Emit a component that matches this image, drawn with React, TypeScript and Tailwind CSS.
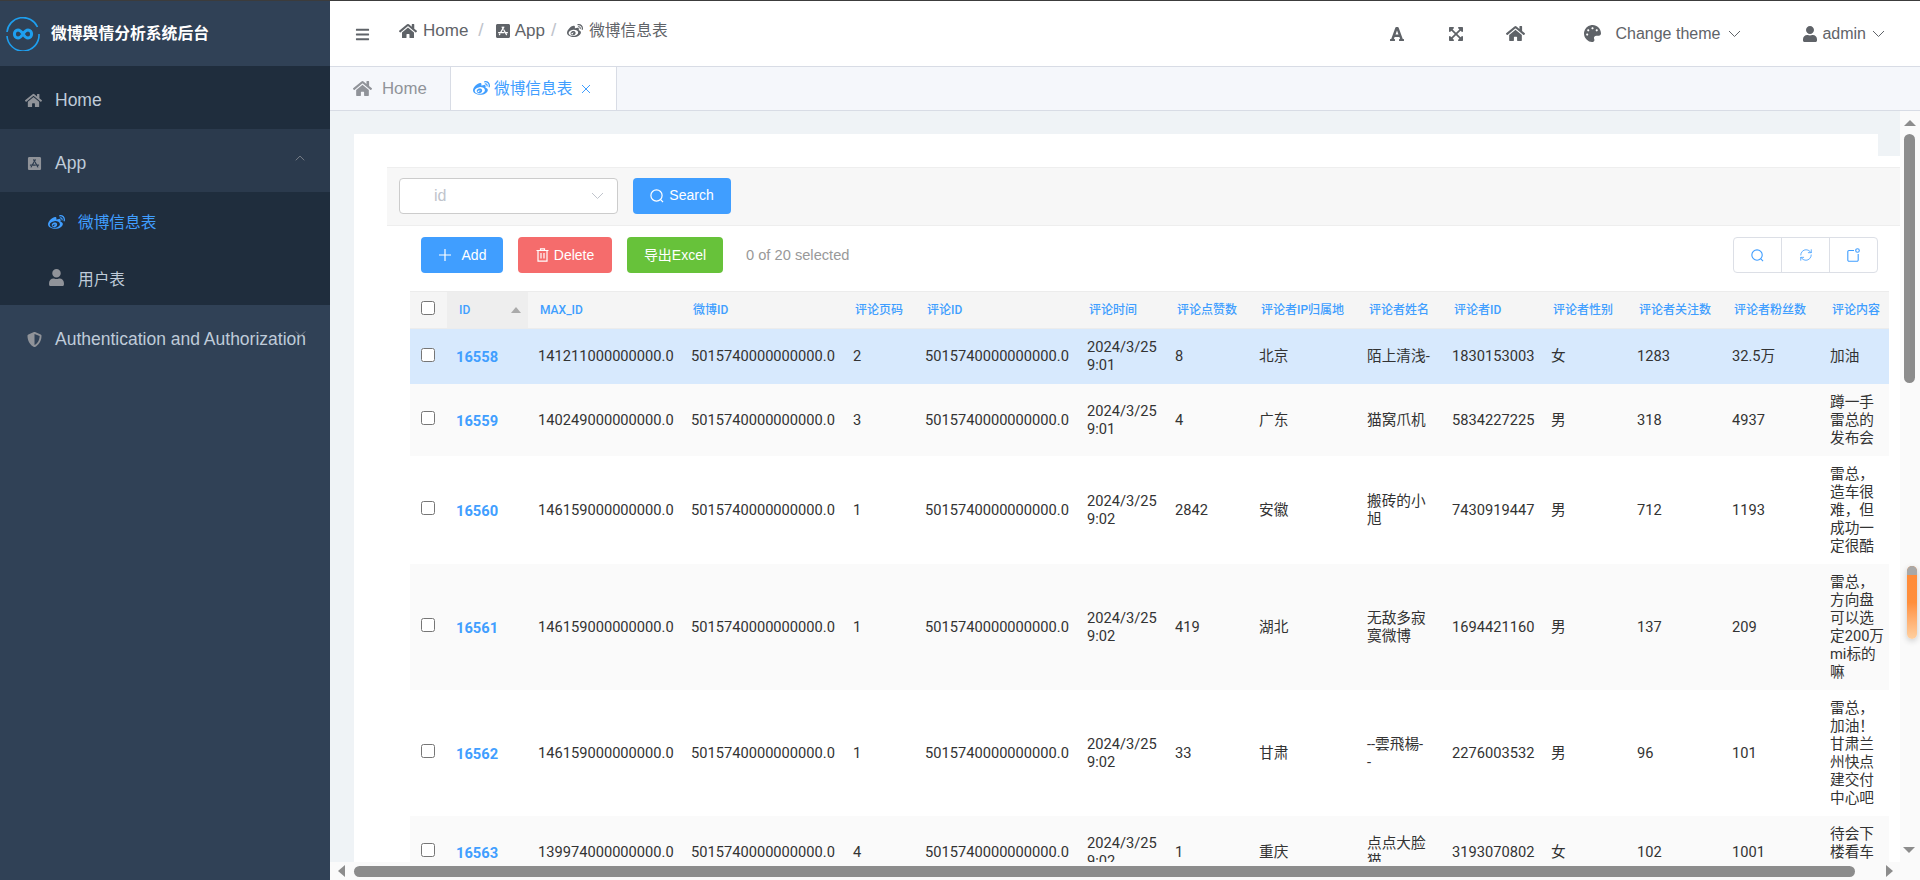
import { FaAppStoreIos, FaBars, FaExpandArrowsAlt, FaFont, FaHome, FaPalette, FaShieldAlt, FaUser, FaWeibo } from "react-icons/fa";
import { RefreshCw } from "lucide-react";

const headers = ["ID", "MAX_ID", "微博ID", "评论页码", "评论ID", "评论时间", "评论点赞数", "评论者IP归属地", "评论者姓名", "评论者ID", "评论者性别", "评论者关注数", "评论者粉丝数", "评论内容"];

const rows = [
  { id: "16558", bg: "bg-[#d7e9fd]", h: "h-[55px]", cells: ["141211000000000.0", "5015740000000000.0", "2", "5015740000000000.0", "2024/3/25 9:01", "8", "北京", "陌上清浅-", "1830153003", "女", "1283", "32.5万", "加油"] },
  { id: "16559", bg: "bg-[#fafafa]", h: "", cells: ["140249000000000.0", "5015740000000000.0", "3", "5015740000000000.0", "2024/3/25 9:01", "4", "广东", "猫窝爪机", "5834227225", "男", "318", "4937", "蹲一手雷总的发布会"] },
  { id: "16560", bg: "bg-white", h: "", cells: ["146159000000000.0", "5015740000000000.0", "1", "5015740000000000.0", "2024/3/25 9:02", "2842", "安徽", "搬砖的小旭", "7430919447", "男", "712", "1193", "雷总，造车很难，但成功一定很酷"] },
  { id: "16561", bg: "bg-[#fafafa]", h: "", cells: ["146159000000000.0", "5015740000000000.0", "1", "5015740000000000.0", "2024/3/25 9:02", "419", "湖北", "无敌多寂寞微博", "1694421160", "男", "137", "209", "雷总，方向盘可以选定200万mi标的嘛"] },
  { id: "16562", bg: "bg-white", h: "", cells: ["146159000000000.0", "5015740000000000.0", "1", "5015740000000000.0", "2024/3/25 9:02", "33", "甘肃", "--雲飛楊-\n-", "2276003532", "男", "96", "101", "雷总，加油！甘肃兰州快点建交付中心吧"] },
  { id: "16563", bg: "bg-[#fafafa]", h: "", cells: ["139974000000000.0", "5015740000000000.0", "4", "5015740000000000.0", "2024/3/25 9:02", "1", "重庆", "点点大脸猫", "3193070802", "女", "102", "1001", "待会下楼看车了"] },
];

function Chevron({ className, up }: { className?: string; up?: boolean }) {
  return (
    <svg width="13" height="8" viewBox="0 0 13 8" fill="none" stroke="currentColor" strokeWidth="1" className={className}>
      <path d={up ? "M1 7 L6.5 1.5 L12 7" : "M1 1 L6.5 6.5 L12 1"} />
    </svg>
  );
}

function SearchIcon({ size = 14 }: { size?: number }) {
  return (
    <svg width={size} height={size} viewBox="0 0 14 14" fill="none" stroke="currentColor" strokeWidth="1.2">
      <circle cx="6.5" cy="6.5" r="5.6" />
      <path d="M10.6 10.6 L13 13" />
    </svg>
  );
}

function Logo() {
  return (
    <svg width="34" height="34" viewBox="0 0 34 34" fill="none" stroke="#1e9fef">
      <path d="M1 15 A16 16 0 0 1 31.5 10" strokeWidth="1.6" />
      <path d="M1 19 A16 16 0 0 0 33 17" strokeWidth="1.6" />
      <path d="M17 17 C15 14 13.5 13 12 13 C9.8 13 8.4 15 8.4 17 C8.4 19 9.8 21 12 21 C13.5 21 15 20 17 17 C19 14 20.5 13 22 13 C24.2 13 25.6 15 25.6 17 C25.6 19 24.2 21 22 21 C20.5 21 19 20 17 17 Z" strokeWidth="3" />
    </svg>
  );
}

function Sidebar() {
  return (
    <aside className="w-[330px] shrink-0 bg-[#304156] text-[#bfcbd9] text-[17.5px]">
      <div className="h-[65px] flex items-center pl-[6px]">
        <Logo />
        <span className="ml-[11px] text-[15.8px] font-bold text-white">微博舆情分析系统后台</span>
      </div>
      <div className="h-[63px] bg-[#1f2d3d] flex items-center pl-[25px] pt-[5px]">
        <FaHome size={17} className="text-[#909399]" />
        <span className="ml-[13px]">Home</span>
      </div>
      <div className="h-[63px] bg-[#2b3a4d] flex items-center pl-[27px] pr-[25px] pt-[5px]">
        <FaAppStoreIos size={15} className="text-[#909399]" />
        <span className="ml-[13px] flex-1">App</span>
        <Chevron up className="text-[#909399] w-[10px] -mt-[10px]" />
      </div>
      <div className="bg-[#1f2d3d] h-[113px] flex flex-col">
        <div className="h-[58px] flex items-center pl-[48px] pt-[3px] text-[#409eff]">
          <FaWeibo size={17} />
          <span className="ml-[13px] text-[15.7px]">微博信息表</span>
        </div>
        <div className="h-[55px] flex items-center pl-[48px] pt-[4px]">
          <FaUser size={17} className="text-[#909399] -mt-[4px]" />
          <span className="ml-[13px] text-[15.7px]">用户表</span>
        </div>
      </div>
      <div className="relative h-[63px] flex items-center pl-[27px] pt-[5px]">
        <FaShieldAlt size={15} className="text-[#909399]" />
        <span className="ml-[13px] whitespace-nowrap">Authentication and Authorization</span>
        <Chevron className="absolute left-[295px] top-[25px] text-[#909399] w-[11px]" />
      </div>
    </aside>
  );
}

function TopNav() {
  return (
    <header className="h-[65px] shrink-0 bg-white flex items-center text-[#5f6368] text-[17px]">
      <FaBars size={15} className="ml-[25px] mt-[1px]" />
      <div className="flex items-center ml-[29px] -mt-[6px]">
        <FaHome size={18} />
        <span className="ml-[6px]">Home</span>
        <span className="ml-[10px] text-[19px] text-[#c0c4cc]">/</span>
        <FaAppStoreIos size={16} className="ml-[11px]" />
        <span className="ml-[4px]">App</span>
        <span className="ml-[6px] text-[19px] text-[#c0c4cc]">/</span>
        <FaWeibo size={16} className="ml-[11px]" />
        <span className="ml-[6px] text-[15.7px]">微博信息表</span>
      </div>
      <div className="ml-auto flex items-center pr-[35px] text-[16px]">
        <FaFont size={16} />
        <FaExpandArrowsAlt size={16} className="ml-[43px]" />
        <FaHome size={19} className="ml-[42px]" />
        <FaPalette size={17} className="ml-[59px]" />
        <span className="ml-[14px]">Change theme</span>
        <Chevron className="ml-[8px]" />
        <FaUser size={16} className="ml-[61px]" />
        <span className="ml-[4px]">admin</span>
        <Chevron className="ml-[6px]" />
      </div>
    </header>
  );
}

function Tabs() {
  return (
    <div className="h-[45px] shrink-0 flex bg-[#f5f7fb] border-y border-[#d8dce5] text-[16.8px]">
      <div className="w-[121px] flex items-center pl-[23px] text-[#909399] border-r border-[#d8dce5]">
        <FaHome size={19} />
        <span className="ml-[10px]">Home</span>
      </div>
      <div className="w-[166px] flex items-center pl-[22px] bg-white text-[#409eff] border-r border-[#d8dce5]">
        <FaWeibo size={17} />
        <span className="ml-[4px] text-[15.7px]">微博信息表</span>
        <svg width="10" height="10" viewBox="0 0 10 10" stroke="currentColor" strokeWidth="1" className="ml-[9px]">
          <path d="M1 1 L9 9 M9 1 L1 9" />
        </svg>
      </div>
    </div>
  );
}

function Toolbar() {
  return (
    <>
      <div className="ml-[33px] mt-[11px] h-[59px] bg-[#f7f7f7] border-y border-[#eeeeee] flex items-center pl-[12px] pb-[2px]">
        <div className="w-[219px] h-[36px] bg-white border border-[#cccccc] rounded-[4px] flex items-center pl-[34px] pr-[13px] justify-between text-[#c0c4cc] text-[16px]">
          <span>id</span>
          <Chevron />
        </div>
        <button className="ml-[15px] w-[98px] h-[36px] bg-[#409eff] text-white text-[14px] rounded-[4px] flex items-center justify-center gap-[5px]">
          <SearchIcon />
          <span>Search</span>
        </button>
      </div>
      <div className="ml-[67px] mt-[11px] flex items-center h-[36px] pr-[22px]">
        <button className="w-[82px] h-[36px] bg-[#409eff] text-white text-[14px] rounded-[4px] flex items-center justify-center">
          <svg width="14" height="14" viewBox="0 0 14 14" stroke="currentColor" strokeWidth="1.2">
            <path d="M7 1 V13 M1 7 H13" />
          </svg>
          <span className="ml-[10px]">Add</span>
        </button>
        <button className="ml-[15px] w-[94px] h-[36px] bg-[#f56c6c] text-white text-[14px] rounded-[4px] flex items-center justify-center">
          <svg width="13" height="14" viewBox="0 0 13 14" fill="none" stroke="currentColor" strokeWidth="1.2">
            <path d="M0.5 2.5 H12.5 M4.5 2.5 V0.8 H8.5 V2.5 M2 2.5 V13.2 H11 V2.5 M5 5 V10.5 M8 5 V10.5" />
          </svg>
          <span className="ml-[5px]">Delete</span>
        </button>
        <button className="ml-[15px] w-[96px] h-[36px] bg-[#67c23a] text-white text-[14px] rounded-[4px] flex items-center justify-center">
          导出Excel
        </button>
        <span className="ml-[23px] text-[#999999]">0 of 20 selected</span>
        <div className="ml-auto flex h-[36px] w-[145px] border border-[#dcdfe6] rounded-[4px] text-[#409eff]">
          <div className="flex-1 flex items-center justify-center border-r border-[#dcdfe6]">
            <SearchIcon size={13} />
          </div>
          <div className="flex-1 flex items-center justify-center border-r border-[#dcdfe6]">
            <RefreshCw size={14} strokeWidth={1.4} />
          </div>
          <div className="flex-1 flex items-center justify-center">
            <svg width="13" height="14" viewBox="0 0 13 14" fill="none" stroke="currentColor" strokeWidth="1.1">
              <path d="M7 2.5 H2 A1.2 1.2 0 0 0 0.8 3.7 V12 A1.2 1.2 0 0 0 2 13.2 H10 A1.2 1.2 0 0 0 11.2 12 V6" />
              <circle cx="10.5" cy="2.5" r="1.8" />
            </svg>
          </div>
        </div>
      </div>
    </>
  );
}

function DataTable() {
  return (
    <table className="ml-[56px] mt-[18px] w-[1479px] table-fixed border-collapse font-['Roboto','Noto_Sans_CJK_SC',sans-serif] text-[14.67px] leading-[18px] text-[#333333]">
      <colgroup>
        <col className="w-[37px]" />
        <col className="w-[81px]" />
        <col className="w-[153px]" />
        <col className="w-[162px]" />
        <col className="w-[72px]" />
        <col className="w-[162px]" />
        <col className="w-[88px]" />
        <col className="w-[84px]" />
        <col className="w-[108px]" />
        <col className="w-[85px]" />
        <col className="w-[99px]" />
        <col className="w-[86px]" />
        <col className="w-[95px]" />
        <col className="w-[98px]" />
        <col className="w-[69px]" />
      </colgroup>
      <thead>
        <tr className="h-[37px] bg-[#f5f5f5] border-y border-[#ececec]">
          <th className="p-0 pl-[11px] text-left align-middle">
            <input type="checkbox" className="block w-[14px] h-[14px] -mt-[5px]" readOnly />
          </th>
          {headers.map((h, i) => (
            <th
              key={h}
              className={`p-0 pl-[12px] text-left text-[12px] font-medium text-[#409eff] whitespace-nowrap ${i === 0 ? "bg-[#eeeeee] pl-[11px]" : ""}`}
            >
              {i === 0 ? (
                <div className="flex items-center justify-between pr-[7px]">
                  <span>{h}</span>
                  <span className="w-0 h-0 border-x-[5px] border-x-transparent border-b-[6px] border-b-[#aaaaaa]" />
                </div>
              ) : (
                h
              )}
            </th>
          ))}
        </tr>
      </thead>
      <tbody>
        {rows.map((r) => (
          <tr key={r.id} className={`${r.bg} ${r.h}`}>
            <td className="p-0 pl-[11px] align-middle">
              <input type="checkbox" className="block w-[14px] h-[14px] -mt-[3px]" readOnly />
            </td>
            <td className="pt-[10px] pb-[8px] pl-[9px] font-bold text-[#409eff]">{r.id}</td>
            {r.cells.map((c, i) => (
              <td key={i} className={`py-[9px] pl-[10px] whitespace-pre-line ${i === 12 ? "pr-[3px]" : "pr-[8px]"}`}>
                {c}
              </td>
            ))}
          </tr>
        ))}
      </tbody>
    </table>
  );
}

function Triangle({ dir, className }: { dir: "up" | "down" | "left" | "right"; className?: string }) {
  const points = { up: "0,6 6,0 12,6", down: "0,0 12,0 6,6", left: "7,0 7,12 0,6", right: "0,0 0,12 7,6" }[dir];
  const box = dir === "up" || dir === "down" ? [12, 6] : [7, 12];
  return (
    <svg width={box[0]} height={box[1]} viewBox={`0 0 ${box[0]} ${box[1]}`} className={className}>
      <polygon points={points} fill="#8c8c8c" />
    </svg>
  );
}

export default function App() {
  return (
    <div className="w-[1920px] h-[880px] overflow-hidden flex flex-col font-['Liberation_Sans','Noto_Sans_CJK_SC',sans-serif] text-[14.67px]">
      <div className="h-px shrink-0 bg-[#3c3c3c]" />
      <div className="flex flex-1 min-h-0">
        <Sidebar />
        <main className="flex-1 min-w-0 flex flex-col">
          <TopNav />
          <Tabs />
          <div className="flex flex-1 min-h-0">
            <div className="flex-1 min-w-0 flex flex-col">
              <div className="flex-1 min-h-0 overflow-hidden flex bg-[#eff3f6] pt-[23px] pl-[24px]">
                <div className="flex-1 min-w-0 bg-white">
                  <div className="h-[22px] flex">
                    <div className="flex-1" />
                    <div className="w-[22px] bg-[#eff3f6]" />
                  </div>
                  <Toolbar />
                  <DataTable />
                </div>
              </div>
              <div className="h-[18px] shrink-0 bg-[#fafafa] flex items-center relative">
                <Triangle dir="left" className="ml-[8px]" />
                <div className="ml-[9px] w-[1501px] h-[11px] bg-[#8c8c8c] rounded-full" />
                <Triangle dir="right" className="ml-[31px]" />
              </div>
            </div>
            <div className="relative w-[20px] shrink-0 bg-[#fafafa] flex flex-col items-center pt-[9px] pb-[27px]">
              <Triangle dir="up" />
              <div className="mt-[8px] w-[11px] h-[249px] bg-[#8c8c8c] rounded-full -ml-[1px]" />
              <Triangle dir="down" className="mt-auto -ml-[2px]" />
              <div className="absolute left-[7px] top-[455px] w-[10px] h-[73px] rounded-full overflow-hidden bg-gradient-to-b from-[#ff8a38] via-[#ff8f3c] to-[#ffd0a0] shadow-[0_2px_6px_rgba(0,0,0,0.2)]">
                <div className="h-[9px] bg-[#a8a8a8]" />
              </div>
            </div>
          </div>
        </main>
      </div>
    </div>
  );
}
